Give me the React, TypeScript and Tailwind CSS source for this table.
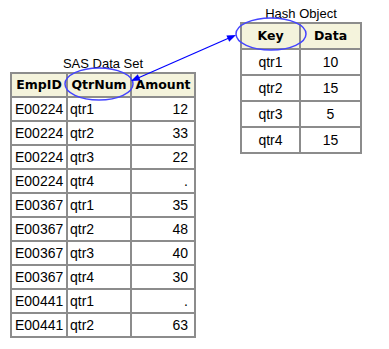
const sasRows = [
  ["E00224", "qtr1", "12"],
  ["E00224", "qtr2", "33"],
  ["E00224", "qtr3", "22"],
  ["E00224", "qtr4", "."],
  ["E00367", "qtr1", "35"],
  ["E00367", "qtr2", "48"],
  ["E00367", "qtr3", "40"],
  ["E00367", "qtr4", "30"],
  ["E00441", "qtr1", "."],
  ["E00441", "qtr2", "63"],
];

const hashRows = [
  ["qtr1", "10"],
  ["qtr2", "15"],
  ["qtr3", "5"],
  ["qtr4", "15"],
];

const head =
  "h-[24px] border border-[#8c8c8c] bg-[#f4f3dc] p-0 text-[12.5px] font-bold text-black font-['DejaVu_Sans',sans-serif]";
const cell = "h-[24px] border border-[#8c8c8c] p-0 text-[14px] text-black";

export default function App() {
  return (
    <div className="relative h-[349px] w-[389px] overflow-hidden bg-white font-['Liberation_Sans',Arial,sans-serif]">
      <div className="flex items-start pl-[10px]">
        <div className="flex flex-col items-center pt-[56px]">
          <p className="h-[16px] text-[13px] leading-[16px] text-black">SAS Data Set</p>
          <table className="border-separate border-spacing-0 border border-[#8c8c8c]">
            <thead>
              <tr>
                <th className={`${head} w-[56px]`}>EmpID</th>
                <th className={`${head} w-[64px]`}>QtrNum</th>
                <th className={`${head} w-[64px]`}>Amount</th>
              </tr>
            </thead>
            <tbody>
              {sasRows.map((r, i) => (
                <tr key={i}>
                  <td className={`${cell} pl-[3px]`}>{r[0]}</td>
                  <td className={`${cell} pl-[2px]`}>{r[1]}</td>
                  <td className={`${cell} pr-[6px] text-right`}>{r[2]}</td>
                </tr>
              ))}
            </tbody>
          </table>
        </div>

        <div className="ml-[44px] flex flex-col items-center pt-[6px]">
          <p className="h-[16px] text-[13px] leading-[16px] text-black">Hash Object</p>
          <table className="border-separate border-spacing-0 border border-[#8c8c8c]">
            <thead>
              <tr>
                <th className={`${head} h-[26px] w-[59px]`}>Key</th>
                <th className={`${head} h-[26px] w-[61px]`}>Data</th>
              </tr>
            </thead>
            <tbody>
              {hashRows.map((r, i) => (
                <tr key={i}>
                  <td className={`${cell} h-[26px] text-center`}>{r[0]}</td>
                  <td className={`${cell} h-[26px] text-center`}>{r[1]}</td>
                </tr>
              ))}
            </tbody>
          </table>
        </div>
      </div>

      {/* callout drawn over the tables */}
      <svg className="pointer-events-none absolute inset-0" width="389" height="349" viewBox="0 0 389 349">
        <ellipse cx="99" cy="84" rx="34" ry="16" fill="none" stroke="#4444ff" strokeWidth="1.5" />
        <ellipse cx="271" cy="34" rx="35" ry="16" fill="none" stroke="#4444ff" strokeWidth="1.5" />
        <line x1="138" y1="78" x2="229" y2="38" stroke="#0000ff" strokeWidth="1.2" />
        <polygon points="131,81 140.6,80.6 137.8,74.2" fill="#0000ff" />
        <polygon points="236,35 229.2,41.8 226.4,35.4" fill="#0000ff" />
      </svg>
    </div>
  );
}
